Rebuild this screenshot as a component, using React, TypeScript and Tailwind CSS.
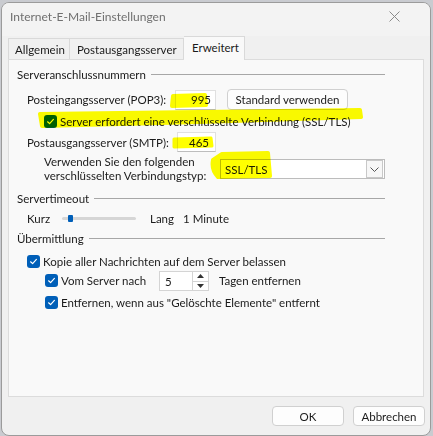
import React from "react";

const font = { fontFamily: 'Lato, "Noto Sans", sans-serif' };

function Check() {
  return (
    <span className="inline-flex h-[13px] w-[13px] shrink-0 items-center justify-center rounded-[3px] bg-[#005fb8]">
      <svg width="9" height="9" viewBox="0 0 9 9">
        <path d="M1.6 4.8 L3.6 6.6 L7.4 2.4" fill="none" stroke="white" strokeWidth="1.2" strokeLinecap="round" strokeLinejoin="round" />
      </svg>
    </span>
  );
}

function Group({ title }: { title: string }) {
  return (
    <div className="flex h-[15px] items-center gap-[5px] pr-[38px]">
      <span className="whitespace-nowrap text-[#1a1a1a]">{title}</span>
      <span className="h-px flex-1 bg-[#a7a7a7]" />
    </div>
  );
}

export default function App() {
  return (
    <div className="relative h-[436px] w-[433px] overflow-hidden whitespace-nowrap bg-[#c9cbd0] text-[11.5px] leading-[15px] text-[#1b1b1b]" style={font}>
      <div className="ml-px mt-[2px] flex h-[434px] w-[430px] flex-col overflow-hidden rounded-[8px] border border-[#9b9b9b] bg-[#f0f0f0]">
        {/* title bar */}
        <div className="flex h-[33px] shrink-0 items-center justify-between bg-[#f3f3f3] pb-[6px] pl-[8px] pr-[30px]">
          <span className="text-[12px] text-[#707070]">Internet-E-Mail-Einstellungen</span>
          <svg width="11" height="11" viewBox="0 0 11 11">
            <path d="M0.5 0.5 L10.5 10.5 M10.5 0.5 L0.5 10.5" stroke="#8a8a8a" strokeWidth="1" />
          </svg>
        </div>
        {/* tabs */}
        <div className="flex h-[23px] shrink-0 items-end pl-[6px]">
          <div className="flex h-[21px] w-[62px] items-center border border-b-0 border-[#d9d9d9] pl-[6px]">Allgemein</div>
          <div className="flex h-[21px] w-[114px] items-center border border-b-0 border-l-0 border-[#d9d9d9] pl-[7px]">Postausgangsserver</div>
          <div className="relative z-10 -mb-px flex h-[24px] w-[61px] items-center border border-b-0 border-l-0 border-[#d9d9d9] bg-[#f9f9f9] pb-[2px] pl-[8px]">Erweitert</div>
        </div>
        {/* panel */}
        <div className="ml-[6px] flex h-[338px] w-[416px] shrink-0 flex-col border border-[#dcdcdc] bg-[#f9f9f9] pl-[8px] pt-[7px]">
          <Group title="Serveranschlussnummern" />
          <div className="mt-[7px] flex h-[21px] items-center pl-[10px]">
            <span className="w-[148px] shrink-0">Posteingangsserver (POP3):</span>
            <div className="flex h-[20px] w-[41px] shrink-0 items-center border border-[#e0e0e0] border-b-[#bdbdbd] bg-white pl-[15px]">995</div>
            <button className="ml-[11px] flex h-[21px] w-[121px] shrink-0 items-center justify-center rounded-[4px] border border-[#d0d0d0] bg-[#fdfdfd]">Standard verwenden</button>
          </div>
          <div className="mt-[4px] flex h-[15px] items-center pl-[27px]">
            <Check />
            <span className="ml-[3px]">Server erfordert eine verschlüsselte Verbindung (SSL/TLS)</span>
          </div>
          <div className="mt-[3px] flex h-[20px] items-center pl-[10px]">
            <span className="w-[150px] shrink-0">Postausgangsserver (SMTP):</span>
            <div className="flex h-[20px] w-[39px] shrink-0 items-center border border-[#e0e0e0] border-b-[#bdbdbd] bg-white pl-[11px]">465</div>
          </div>
          <div className="mt-[3px] flex items-center pl-[27px]">
            <span className="w-[176px] shrink-0 leading-[14px]">Verwenden Sie den folgenden<br />verschlüsselten Verbindungstyp:</span>
            <div className="flex h-[20px] w-[165px] shrink-0 items-center justify-between border border-[#bcbcbc] bg-white pl-[4px] pr-px">
              <span>SSL/TLS</span>
              <span className="flex h-[18px] w-[17px] items-center justify-center border border-[#c8c8c8] bg-[#f7f7f7]">
                <svg width="9" height="5" viewBox="0 0 9 5"><path d="M0.5 0.5 L4.5 4.5 L8.5 0.5" fill="none" stroke="#555" strokeWidth="1" /></svg>
              </span>
            </div>
          </div>
          <div className="mt-[8px]">
            <Group title="Servertimeout" />
          </div>
          <div className="mt-[5px] flex h-[15px] items-center pl-[10px]">
            <span className="w-[35px] shrink-0">Kurz</span>
            <div className="relative h-[3px] w-[74px] shrink-0 rounded-full bg-[#d6d6d6]">
              <span className="absolute left-[6px] top-[-2px] h-[7px] w-[5px] rounded-[1px] bg-[#005fb8]" />
            </div>
            <span className="ml-[14px]">Lang</span>
            <span className="ml-[9px]">1 Minute</span>
          </div>
          <div className="mt-[5px]">
            <Group title="Übermittlung" />
          </div>
          <div className="mt-[8px] flex h-[15px] items-center pl-[10px]">
            <Check />
            <span className="ml-[3px]">Kopie aller Nachrichten auf dem Server belassen</span>
          </div>
          <div className="mt-[1px] flex h-[20px] items-center pl-[28px]">
            <Check />
            <span className="ml-[3px] w-[98px] shrink-0">Vom Server nach</span>
            <div className="mt-[2px] flex h-[20px] w-[50px] shrink-0 items-center border border-[#d4d4d4] bg-white">
              <span className="flex-1 pl-[5px]">5</span>
              <div className="flex h-full w-[16px] flex-col border-l border-[#d4d4d4]">
                <span className="flex flex-1 items-center justify-center border-b border-[#d4d4d4]">
                  <svg width="7" height="4" viewBox="0 0 7 4"><path d="M0 4 L3.5 0 L7 4 Z" fill="#333" /></svg>
                </span>
                <span className="flex flex-1 items-center justify-center">
                  <svg width="7" height="4" viewBox="0 0 7 4"><path d="M0 0 L3.5 4 L7 0 Z" fill="#333" /></svg>
                </span>
              </div>
            </div>
            <span className="ml-[10px]">Tagen entfernen</span>
          </div>
          <div className="mt-[5px] flex h-[15px] items-center pl-[28px]">
            <Check />
            <span className="ml-[3px]">Entfernen, wenn aus "Gelöschte Elemente" entfernt</span>
          </div>
        </div>
        {/* buttons */}
        <div className="mt-[9px] flex justify-end gap-[9px] pr-[5px]">
          <button className="flex h-[20px] w-[72px] items-center justify-center rounded-[4px] border border-[#d0d0d0] bg-[#fdfdfd]">OK</button>
          <button className="flex h-[20px] w-[72px] items-center justify-center rounded-[4px] border border-[#d0d0d0] bg-[#fdfdfd]">Abbrechen</button>
        </div>
      </div>
      {/* highlighter marks */}
      <svg className="pointer-events-none absolute left-0 top-0 mix-blend-multiply" width="433" height="436" viewBox="0 0 433 436">
        <g fill="#ffff00" stroke="#ffff00" strokeLinejoin="round" strokeLinecap="round">
          <path d="M173 96 L205 95 L206 105 L172 106 Z" strokeWidth="4" />
          <path d="M40 114 L200 112 L360 110 L361 117 L200 122 L42 126 Z" strokeWidth="4" />
          <path d="M174 139 L211 138 L212 146 L174 147 Z" strokeWidth="3" />
          <path d="M222 154 L268 153 L270 176 L218 177 Q211 170 213 160 Z" strokeWidth="4" />
        </g>
      </svg>
    </div>
  );
}
